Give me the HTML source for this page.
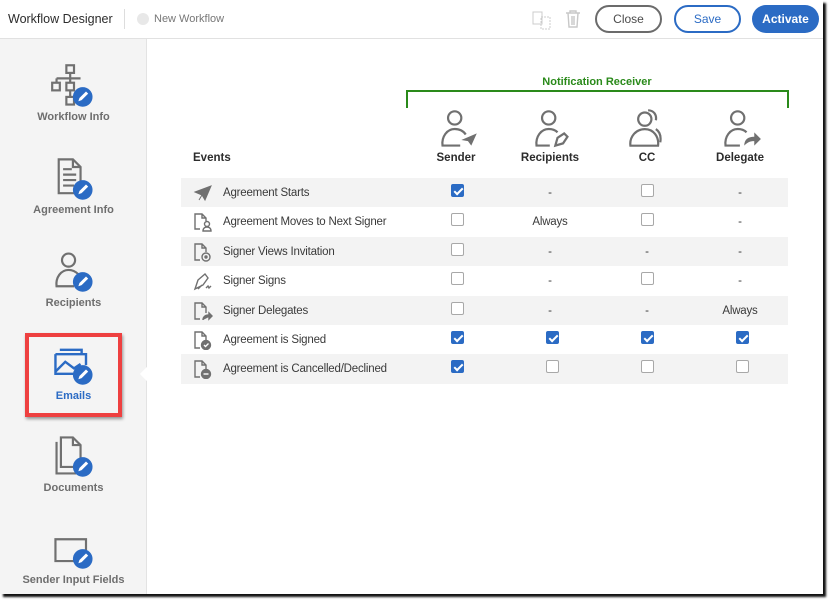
<!DOCTYPE html>
<html><head><meta charset="utf-8"><style>
*{box-sizing:border-box;margin:0;padding:0}
body{width:830px;height:600px;background:#fff;font-family:"Liberation Sans",sans-serif;position:relative;overflow:hidden;color:#2c2c2c}
#win{position:absolute;left:0;top:0;width:823px;height:594px;background:#fff;box-shadow:3px 3px 2px #111;overflow:hidden}
#hdr{position:absolute;left:0;top:0;width:823px;height:39px;border-bottom:1px solid #e1e1e1}
.t{position:absolute;font-size:12.5px}
.btn{position:absolute;top:5px;height:28px;border-radius:14px;font-size:12px;text-align:center;line-height:24px}
#side{position:absolute;left:0;top:39px;width:147px;height:560px;background:#f4f4f4;border-right:1px solid #e3e3e3}
.si{position:absolute;left:0;width:147px;text-align:center;font-size:11px;font-weight:bold;color:#6e6e6e}
.si svg{position:absolute;left:50px}
.si span{position:absolute;left:0;width:147px}
.row{position:absolute;left:181px;width:607px;height:29.4px;font-size:11.5px;color:#3a3a3a;letter-spacing:-0.2px}
.row.g{background:#f3f3f3}
.row .l{position:absolute;left:42px;top:9px}
.row svg.ic{position:absolute;left:12px;top:5px}
.cb{position:absolute;width:13px;height:13px;border:1px solid #a8a8a8;border-radius:2px;background:#fff;top:6px}
.cb.c{background:#2b6bc4;border-color:#2b6bc4}
.cb.c:after{content:"";position:absolute;left:3.5px;top:1px;width:3px;height:7px;border:solid #fff;border-width:0 2px 2px 0;transform:rotate(45deg)}
.tx{position:absolute;top:9px;width:80px;text-align:center}
.hd{position:absolute;top:152px;font-size:11.5px;font-weight:bold;color:#2c2c2c;width:80px;text-align:center}
</style></head><body>
<div id="win">
<div id="hdr">
 <div class="t" style="left:8px;top:12px;color:#2c2c2c">Workflow Designer</div>
 <div style="position:absolute;left:124px;top:9px;width:1px;height:20px;background:#ddd"></div>
 <div style="position:absolute;left:137px;top:13px;width:12px;height:12px;border-radius:50%;background:#e8e8e8"></div>
 <div class="t" style="left:154px;top:13px;font-size:11px;color:#777">New Workflow</div>
 <svg style="position:absolute;left:532px;top:10px" width="20" height="20"><rect x="1" y="2" width="9" height="12" fill="none" stroke="#ccc"/><rect x="9" y="7" width="9" height="12" fill="none" stroke="#ccc" stroke-dasharray="2 1"/></svg>
 <svg style="position:absolute;left:564px;top:9px" width="18" height="20"><path d="M2 4h14M6 4V2h6v2M4 4l1 14h8l1-14M8 7v9M10 7v9" fill="none" stroke="#c8c8c8" stroke-width="1.4"/></svg>
 <div class="btn" style="left:595px;width:67px;border:2px solid #6b6b6b;color:#4b4b4b">Close</div>
 <div class="btn" style="left:674px;width:67px;border:2px solid #2b6bc4;color:#2b6bc4">Save</div>
 <div class="btn" style="left:752px;width:67px;background:#2b6bc4;color:#fff;line-height:28px;font-weight:bold">Activate</div>
</div>
<div id="side">
 <div class="si" style="top:24px"><svg width="48" height="46" viewBox="0 0 44 42"><g fill="none" stroke="#707070" stroke-width="2"><rect x="15" y="2" width="7" height="7"/><path d="M18.5 9v5M6 14h22M6 14v4M18.5 14v4"/><rect x="2" y="18" width="7" height="7"/><rect x="15" y="18" width="7" height="7"/><path d="M18.5 25v6"/><rect x="15" y="31" width="7" height="7"/></g><circle cx="30" cy="31" r="9" fill="#2b6bc4"/><path d="M26 35l1-3 6-6 2 2-6 6z" fill="#fff"/></svg><span style="top:48px">Workflow Info</span></div>
 <div class="si" style="top:117px"><svg width="48" height="46" viewBox="0 0 44 42"><path d="M8 3h13l7 7v24H8z M21 3v7h7 M12 12h8M12 17h12M12 22h12M12 27h10" fill="none" stroke="#707070" stroke-width="2"/><circle cx="30" cy="31" r="9" fill="#2b6bc4"/><path d="M26 35l1-3 6-6 2 2-6 6z" fill="#fff"/></svg><span style="top:48px">Agreement Info</span></div>
 <div class="si" style="top:209px"><svg width="48" height="46" viewBox="0 0 44 42"><circle cx="17" cy="11" r="6" fill="none" stroke="#707070" stroke-width="2"/><path d="M22 35H6c-1-8 4-15 11-15 4 0 7 2 9 4" fill="none" stroke="#707070" stroke-width="2"/><circle cx="30" cy="31" r="9" fill="#2b6bc4"/><path d="M26 35l1-3 6-6 2 2-6 6z" fill="#fff"/></svg><span style="top:49px">Recipients</span></div>
 <div class="si" style="top:302px"><svg width="48" height="46" viewBox="0 0 44 42"><g fill="none" stroke="#2b6bc4" stroke-width="2.2"><path d="M9 8h20v4M5 12h28v10M5 12v18h18"/><path d="M5 28l9-9 8 6 6-4"/></g><circle cx="30" cy="31" r="9" fill="#2b6bc4"/><path d="M26 35l1-3 6-6 2 2-6 6z" fill="#fff"/></svg><span style="top:49px;color:#2b6bc4">Emails</span></div>
 <div class="si" style="top:394px"><svg width="48" height="46" viewBox="0 0 44 42"><path d="M10 4h11l7 7v20H10z M21 4v7h7 M6 8v29h18" fill="none" stroke="#707070" stroke-width="2"/><circle cx="30" cy="31" r="9" fill="#2b6bc4"/><path d="M26 35l1-3 6-6 2 2-6 6z" fill="#fff"/></svg><span style="top:49px">Documents</span></div>
 <div class="si" style="top:486px"><svg width="48" height="46" viewBox="0 0 44 42"><path d="M22 33H5V13h28v10" fill="none" stroke="#707070" stroke-width="2"/><circle cx="30" cy="31" r="9" fill="#2b6bc4"/><path d="M26 35l1-3 6-6 2 2-6 6z" fill="#fff"/></svg><span style="top:49px">Sender Input Fields</span></div>
</div>
<div style="position:absolute;left:142px;top:369px;width:10px;height:10px;background:#fff;transform:rotate(45deg)"></div>
<div style="position:absolute;left:25px;top:333px;width:97px;height:84px;border:4px solid #ee4040;box-shadow:1px 2px 3px rgba(0,0,0,.4)"></div>

<div style="position:absolute;left:406px;top:76px;width:382px;text-align:center;font-size:11px;font-weight:bold;color:#2a8a1a">Notification Receiver</div>
<div style="position:absolute;left:406px;top:90px;width:383px;height:18px;border:2px solid #2a8a1a;border-bottom:none"></div>

<div style="position:absolute;left:193px;top:152px;font-size:11.5px;font-weight:bold">Events</div>
<svg style="position:absolute;left:437px;top:109px" width="42" height="40" viewBox="0 0 38 36"><g fill="none" stroke="#707070" stroke-width="2"><circle cx="16" cy="8" r="6"/><path d="M21 33H5c-1-8 4-15 11-15 5 0 8 2 10 5"/></g><path d="M22 28l14-6-5 11-3-4z" fill="#707070"/></svg>
<div class="hd" style="left:416px">Sender</div>
<svg style="position:absolute;left:531px;top:109px" width="42" height="40" viewBox="0 0 38 36"><g fill="none" stroke="#707070" stroke-width="2"><circle cx="16" cy="8" r="6"/><path d="M17 33H5c-1-8 4-15 11-15 4 0 6 1 8 3"/><path d="M22 33l2-7 6-4 3 3-4 6z"/></g></svg>
<div class="hd" style="left:510px">Recipients</div>
<svg style="position:absolute;left:626px;top:107px" width="42" height="42" viewBox="0 0 38 38"><g fill="none" stroke="#707070" stroke-width="2"><circle cx="17" cy="11" r="6"/><path d="M4 35c-1-8 5-15 13-15s13 7 12 15z"/><path d="M20 3c5 0 8 4 7 9M27 20c3 2 5 6 4 12"/></g></svg>
<div class="hd" style="left:607px">CC</div>
<svg style="position:absolute;left:720px;top:109px" width="42" height="40" viewBox="0 0 38 36"><g fill="none" stroke="#707070" stroke-width="2"><circle cx="16" cy="8" r="6"/><path d="M18 33H5c-1-8 4-15 11-15 4 0 6 1 8 3"/></g><path d="M22 33c0-6 4-8 9-8v-4l6 6-6 6v-4c-4 0-6 1-9 4z" fill="#707070"/></svg>
<div class="hd" style="left:700px">Delegate</div>

<div class="row g" style="top:178px"><svg class="ic" width="20" height="20"><path d="M2 9l16-6-6 14-3-5z M9 12l-3 5" fill="#707070" stroke="#707070"/></svg><div class="l">Agreement Starts</div><div class="cb c" style="left:270px"></div><div class="tx" style="left:329px">-</div><div class="cb" style="left:460px"></div><div class="tx" style="left:519px">-</div></div>
<div class="row" style="top:207.4px"><svg class="ic" width="20" height="20" fill="none" stroke="#707070" stroke-width="1.4"><path d="M7 17H2V2h7l4 4v3M9 2v4h4"/><circle cx="14" cy="12" r="2.5"/><path d="M10 19c0-3 2-4 4-4s4 1 4 4z"/></svg><div class="l">Agreement Moves to Next Signer</div><div class="cb" style="left:270px"></div><div class="tx" style="left:329px">Always</div><div class="cb" style="left:460px"></div><div class="tx" style="left:519px">-</div></div>
<div class="row g" style="top:236.8px"><svg class="ic" width="20" height="20" fill="none" stroke="#707070" stroke-width="1.4"><path d="M7 18H2V2h7l4 4v4M9 2v4h4"/><circle cx="13" cy="15" r="4"/><circle cx="13" cy="15" r="1" fill="#707070"/></svg><div class="l">Signer Views Invitation</div><div class="cb" style="left:270px"></div><div class="tx" style="left:329px">-</div><div class="tx" style="left:426px">-</div><div class="tx" style="left:519px">-</div></div>
<div class="row" style="top:266.2px"><svg class="ic" width="20" height="20" fill="none" stroke="#707070" stroke-width="1.4"><path d="M2 18l3-9 7-6 3 4-5 7z M5 18l4-4 M13 17l2-2 1 2 2-2"/></svg><div class="l">Signer Signs</div><div class="cb" style="left:270px"></div><div class="tx" style="left:329px">-</div><div class="cb" style="left:460px"></div><div class="tx" style="left:519px">-</div></div>
<div class="row g" style="top:295.6px"><svg class="ic" width="20" height="20" fill="none" stroke="#707070" stroke-width="1.4"><path d="M7 18H2V2h7l4 4v6M9 2v4h4"/><path d="M10 19c0-3 2-5 6-5v-2l3 3-3 3v-2" fill="#707070"/></svg><div class="l">Signer Delegates</div><div class="cb" style="left:270px"></div><div class="tx" style="left:329px">-</div><div class="tx" style="left:426px">-</div><div class="tx" style="left:519px">Always</div></div>
<div class="row" style="top:325px"><svg class="ic" width="20" height="20" fill="none" stroke="#707070" stroke-width="1.4"><path d="M7 18H2V2h7l4 4v4M9 2v4h4"/><circle cx="13" cy="15" r="4.5" fill="#707070"/><path d="M11 15l1.5 1.5 3-3" stroke="#fff"/></svg><div class="l">Agreement is Signed</div><div class="cb c" style="left:270px"></div><div class="cb c" style="left:365px"></div><div class="cb c" style="left:460px"></div><div class="cb c" style="left:555px"></div></div>
<div class="row g" style="top:354.4px"><svg class="ic" width="20" height="20" fill="none" stroke="#707070" stroke-width="1.4"><path d="M7 18H2V2h7l4 4v4M9 2v4h4"/><circle cx="13" cy="15" r="4.5" fill="#707070"/><path d="M10.5 15h5" stroke="#fff"/></svg><div class="l">Agreement is Cancelled/Declined</div><div class="cb c" style="left:270px"></div><div class="cb" style="left:365px"></div><div class="cb" style="left:460px"></div><div class="cb" style="left:555px"></div></div>
</div>
</body></html>
